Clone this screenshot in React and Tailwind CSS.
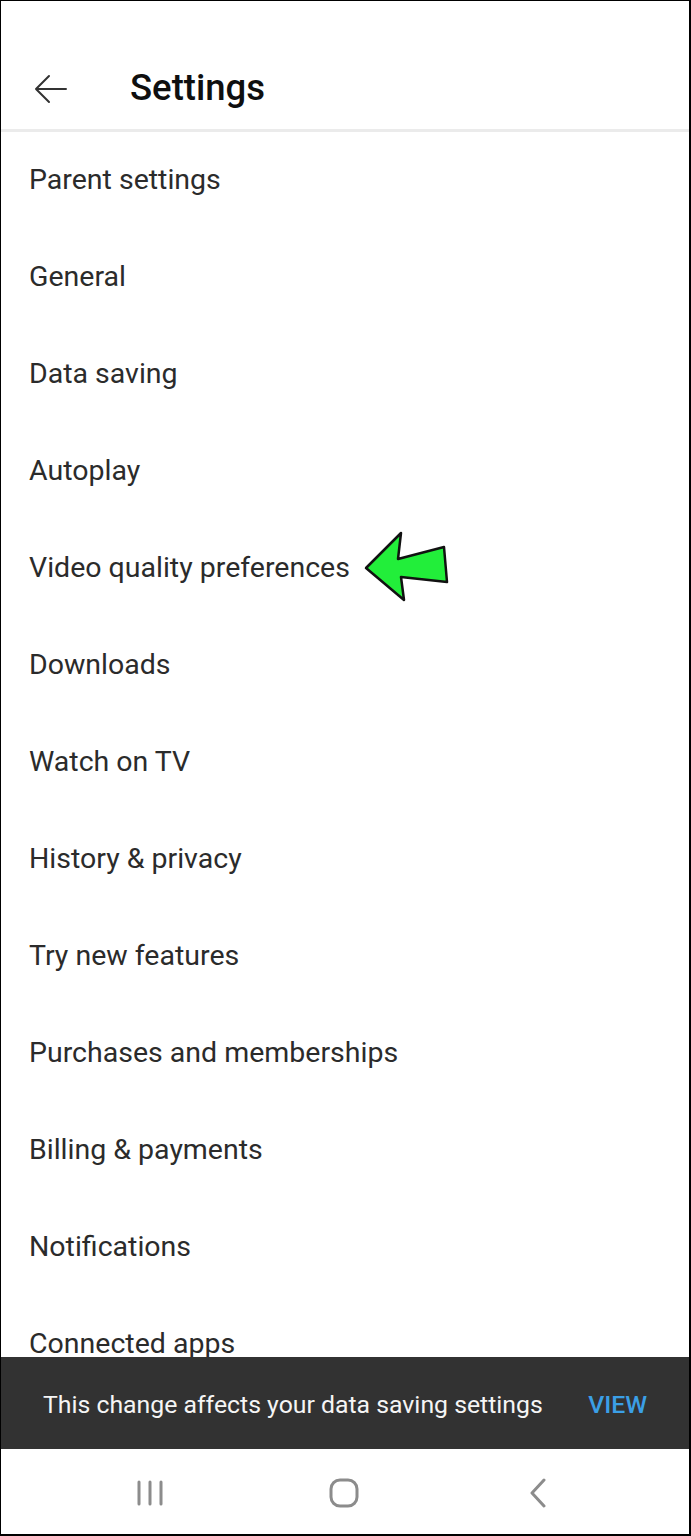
import React from "react";

const items = [
  "Parent settings",
  "General",
  "Data saving",
  "Autoplay",
  "Video quality preferences",
  "Downloads",
  "Watch on TV",
  "History & privacy",
  "Try new features",
  "Purchases and memberships",
  "Billing & payments",
  "Notifications",
  "Connected apps",
];

const font = { fontFamily: "Roboto, 'Noto Sans', Arial, sans-serif" };

const PointerArrow = () => (
  <svg
    className="absolute left-[360px] top-[8px]"
    width="92"
    height="78"
    viewBox="0 0 92 78"
  >
    <polygon
      points="5,40 40,5 37,31 83,19 86,54 40,49 43,72"
      fill="#22ee3a"
      stroke="#111"
      strokeWidth="2.5"
      strokeLinejoin="round"
    />
  </svg>
);

export default function App() {
  return (
    <div
      className="w-[691px] h-[1536px] bg-white flex flex-col border-t border-l border-r-2 border-b-2 border-black overflow-hidden"
      style={font}
    >
      <header className="h-[131px] shrink-0 flex items-center pt-[48px] border-b-[3px] border-[#ebebeb]">
        <button className="ml-[33px] w-[34px] h-[34px] flex items-center justify-center text-[#333]">
          <svg width="34" height="30" viewBox="0 0 34 30" fill="none" stroke="currentColor" strokeWidth="2" strokeLinecap="round" strokeLinejoin="round">
            <path d="M32 15H2M15 2L2 15l13 13" />
          </svg>
        </button>
        <h1 className="ml-[62px] text-[36.5px] font-medium text-[#0f0f0f] leading-none pb-[2px]">Settings</h1>
      </header>

      <div className="flex-1 overflow-hidden">
        {items.map((label, i) => (
          <div key={label} className="relative h-[97px] flex items-center pl-[28px]">
            <span className="text-[28.5px] text-[#2b2b2b]">{label}</span>
            {i === 4 && <PointerArrow />}
          </div>
        ))}
      </div>

      <div className="h-[92px] shrink-0 bg-[#323232] flex items-center justify-between pl-[42px] pr-[42px] pt-[4px]">
        <span className="text-[24.8px] text-[#f5f5f5]">This change affects your data saving settings</span>
        <span className="text-[24.8px] font-medium text-[#3b9fe6]">VIEW</span>
      </div>

      <nav className="h-[85px] shrink-0 flex items-center pl-[135px] pt-[2px]">
        <svg width="28" height="28" viewBox="0 0 28 28" stroke="#8c8c8c" strokeWidth="3" strokeLinecap="round">
          <path d="M3 3v22M14 3v22M25 3v22" />
        </svg>
        <svg className="ml-[165px]" width="30" height="30" viewBox="0 0 30 30" fill="none" stroke="#8c8c8c" strokeWidth="3">
          <rect x="2" y="2" width="26" height="26" rx="9" />
        </svg>
        <svg className="ml-[169px]" width="20" height="30" viewBox="0 0 20 30" fill="none" stroke="#8c8c8c" strokeWidth="3" strokeLinecap="round" strokeLinejoin="round">
          <path d="M16 2L4 15l12 13" />
        </svg>
      </nav>
    </div>
  );
}
